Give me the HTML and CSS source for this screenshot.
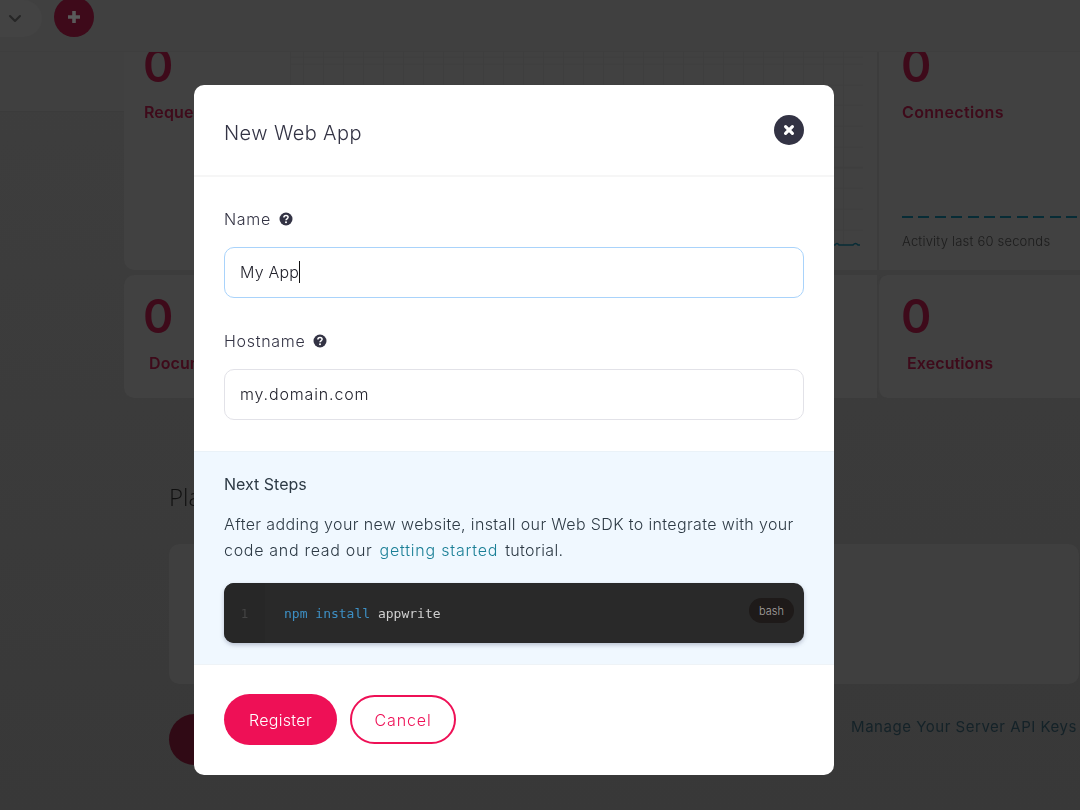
FILE: index.html
```html
<!DOCTYPE html>
<html lang="en">
<head>
<meta charset="utf-8">
<title>New Web App</title>
<link rel="stylesheet" href="styles.css">
</head>
<body>
<div class="page">
  <header class="topbar">
    <div class="scope">
      <svg class="chevron" viewBox="0 0 14 10" width="14" height="10"><path d="M2 2l5 5 5-5" fill="none" stroke="#262626" stroke-width="2" stroke-linecap="round" stroke-linejoin="round"/></svg>
    </div>
    <div class="add">
      <svg viewBox="0 0 14 14" width="14" height="14"><path d="M7 1v12M1 7h12" fill="none" stroke="#5a5a5a" stroke-width="3.6"/></svg>
    </div>
  </header>
  <section class="stats">
    <div class="side"></div>
    <div class="stat-grid">
      <div class="stat stat-top">
        <div class="stat-text clip">
          <div class="num">0</div>
          <div class="lbl">Requests</div>
        </div>
        <div class="chart">
          <svg class="trace" viewBox="0 0 28 5" width="28" height="5"><path d="M0 4h2q2-3 4 0h14q2.5-3 5 0h2" fill="none" stroke="#072c36" stroke-width="1.4"/></svg>
        </div>
      </div>
      <div class="stat stat-top stat-right">
        <div class="stat-text clip">
          <div class="num">0</div>
          <div class="lbl lbl-c">Connections</div>
        </div>
        <div class="spark"></div>
        <div class="activity">Activity last 60 seconds</div>
      </div>
      <div class="stat stat-low">
        <div class="num">0</div>
        <div class="lbl lbl-i">Documents</div>
      </div>
      <div class="stat stat-low stat-right">
        <div class="num">0</div>
        <div class="lbl lbl-i">Executions</div>
      </div>
    </div>
  </section>
  <section class="platforms">
    <h2 class="plat-title">Platforms</h2>
    <div class="plat-card"></div>
    <div class="plat-foot">
      <div class="plat-btn"></div>
      <div class="plat-link">Manage Your Server API Keys</div>
    </div>
  </section>
</div>

<div class="overlay">
  <div class="modal">
    <div class="modal-head">
      <h1 class="modal-title">New Web App</h1>
      <button class="close" type="button" aria-label="Close">
        <svg viewBox="0 0 12 12" width="12" height="12"><path d="M2.6 2.6l6.8 6.8M9.4 2.6l-6.8 6.8" fill="none" stroke="#fff" stroke-width="3.2" stroke-linecap="round"/></svg>
      </button>
    </div>
    <div class="modal-body">
      <div class="label">Name
        <svg class="help" viewBox="0 0 14 14" width="14" height="14"><circle cx="7" cy="7" r="6.5" fill="#333344"/><path d="M4.9 5.4c0-1.3 1-1.9 2.1-1.9s2.1.7 2.1 1.8c0 1.5-2.1 1.5-2.1 2.9" fill="none" stroke="#fff" stroke-width="1.5"/><circle cx="7" cy="10.3" r="1" fill="#fff"/></svg>
      </div>
      <div class="input input-focus">My App<span class="caret"></span></div>
      <div class="label label-2">Hostname
        <svg class="help" viewBox="0 0 14 14" width="14" height="14"><circle cx="7" cy="7" r="6.5" fill="#333344"/><path d="M4.9 5.4c0-1.3 1-1.9 2.1-1.9s2.1.7 2.1 1.8c0 1.5-2.1 1.5-2.1 2.9" fill="none" stroke="#fff" stroke-width="1.5"/><circle cx="7" cy="10.3" r="1" fill="#fff"/></svg>
      </div>
      <div class="input input-host">my.domain.com</div>
    </div>
    <div class="steps">
      <div class="steps-title">Next Steps</div>
      <p class="steps-text">After adding your new website, install our Web SDK to integrate with your<br><span class="steps-wide">code and read our</span> <a class="steps-link">getting started</a> tutorial.</p>
      <div class="code">
        <div class="gutter">1</div>
        <div class="code-line"><span class="kw">npm install</span> appwrite</div>
        <div class="lang">bash</div>
      </div>
    </div>
    <div class="modal-foot">
      <button class="btn btn-fill" type="button">Register</button>
      <button class="btn btn-line" type="button">Cancel</button>
    </div>
  </div>
</div>
</body>
</html>
```
FILE: styles.css
```css
* { box-sizing: border-box; }
html, body { margin: 0; height: 100%; overflow: hidden; }
body { font-family: "Inter", "Liberation Sans", sans-serif; background: #3a3a3a; }

.page {
  height: 810px;
  display: flex;
  flex-direction: column;
  overflow: hidden;
  background: linear-gradient(#3e3e3e, #383838);
  filter: blur(0.5px);
}

.topbar {
  height: 52px;
  flex: none;
  display: flex;
  align-items: flex-start;
  gap: 12px;
  background: #404040;
  border-bottom: 1px solid #3e3e3e;
}
.scope {
  width: 42px;
  height: 37px;
  background: #434343;
  border-radius: 0 19px 19px 0;
  display: flex;
  align-items: center;
  justify-content: flex-end;
  padding-right: 20px;
}
.add {
  width: 40px;
  height: 40px;
  margin-top: -3px;
  background: #3e0a1a;
  border-radius: 50%;
  display: flex;
  align-items: center;
  justify-content: center;
}

.stats { display: flex; flex: none; }
.side {
  width: 124px;
  height: 60px;
  flex: none;
  background: #404040;
  border-bottom: 1px solid #3b3b3b;
}
.stat-grid {
  flex: 1;
  display: grid;
  grid-template-columns: 753px 1fr;
  grid-template-rows: 218px 123px;
  row-gap: 5px;
}
.stat { background: #414141; position: relative; overflow: hidden; }
.stat-top { display: flex; padding-left: 20px; border-radius: 0 0 0 10px; }
.stat-right { border-left: 2px solid #3c3c3c; border-radius: 0; padding-left: 23px; }
.stat-top.stat-right { display: block; }
.stat-low { border-radius: 10px 0 0 10px; padding: 16px 20px 0; }
.stat-low.stat-right { padding-left: 23px; }
.clip .num { margin-top: -12px; }
.num {
  margin-left: -1px;
  font-size: 46px;
  font-weight: 600;
  line-height: 50px;
  color: #3e0a1a;
}
.lbl {
  margin-top: 10px;
  font-size: 16px;
  font-weight: 600;
  line-height: 24px;
  letter-spacing: 0.1px;
  color: #3e0a1a;
}
.stat-low .lbl { margin-top: 10px; }
.lbl-c { letter-spacing: 0.35px; }
.lbl-i { margin-left: 5px; }
.stat-text { width: 146px; flex: none; }
.chart {
  width: 573px;
  height: 193px;
  background-image:
    repeating-linear-gradient(90deg, #3e3e3e 0 1px, transparent 1px 20px),
    repeating-linear-gradient(180deg, #3e3e3e 0 1px, transparent 1px 20.7px);
  background-position: 13px 0, 0 11.6px;
  position: relative;
}
.trace {
  position: absolute;
  right: 2px;
  bottom: -1px;
}
.spark {
  margin-top: 92px;
  height: 2px;
  background: repeating-linear-gradient(90deg, #072c36 0 11px, transparent 11px 16.4px);
}
.activity {
  margin-top: 13px;
  font-size: 13px;
  font-weight: 300;
  line-height: 20px;
  letter-spacing: 0.2px;
  color: #1c1c1c;
}

.platforms { padding: 83px 1px 0 169px; flex: 1; }
.plat-title {
  margin: 0;
  font-family: "Open Sans", sans-serif;
  font-size: 24px;
  font-weight: 300;
  line-height: 32px;
  color: #101010;
}
.plat-card {
  margin-top: 31px;
  height: 140px;
  background: #3f3f3f;
  border-radius: 10px;
}
.plat-foot {
  margin-top: 30px;
  display: flex;
  justify-content: space-between;
  align-items: flex-start;
}
.plat-btn { width: 110px; height: 51px; background: #300a15; border-radius: 26px; }
.plat-link {
  margin-top: 2px;
  font-size: 15px;
  line-height: 22px;
  letter-spacing: 0.53px;
  color: #142228;
  padding-right: 2px;
}

.overlay {
  position: fixed;
  inset: 0;
  display: flex;
  justify-content: center;
  align-items: flex-start;
  padding: 85px 52px 0 0;
}
.modal {
  width: 640px;
  height: 690px;
  background: #fff;
  border-radius: 10px;
  overflow: hidden;
  display: flex;
  flex-direction: column;
  color: #333344;
}
.modal-head {
  height: 92px;
  flex: none;
  padding: 30px 30px 0;
  display: flex;
  justify-content: space-between;
  align-items: flex-start;
  border-bottom: 2px solid #f6f6f6;
}
.modal-title {
  margin: 0;
  font-size: 20px;
  font-weight: 300;
  line-height: 36px;
  letter-spacing: 0.4px;
}
.close {
  width: 30px;
  height: 30px;
  padding: 0;
  border: 0;
  border-radius: 50%;
  background: #333344;
  display: flex;
  align-items: center;
  justify-content: center;
}
.modal-body { padding: 30px 30px 0; height: 274px; flex: none; }
.label {
  display: flex;
  align-items: center;
  gap: 8px;
  font-size: 16px;
  font-weight: 300;
  line-height: 24px;
  letter-spacing: 0.7px;
  height: 24px;
}
.label-2 { margin-top: 31px; }
.help { flex: none; }
.input {
  margin-top: 16px;
  height: 51px;
  border: 1px solid #e2e2e8;
  border-radius: 10px;
  padding: 0 15px 2px;
  display: flex;
  align-items: center;
  font-size: 16px;
  font-weight: 300;
  letter-spacing: 0.2px;
  color: #22222c;
}
.input-focus { border-color: #a9d3fb; }
.input-host { letter-spacing: 0.85px; }
.caret { width: 1px; height: 22px; background: #111; }

.steps {
  height: 214px;
  flex: none;
  background: #f0f8ff;
  border-top: 1px solid #eaf2f8;
  border-bottom: 1px solid #eef3f7;
  padding: 20px 30px 0;
  color: #2d3a45;
}
.steps-title { font-size: 16px; font-weight: 400; line-height: 24px; }
.steps-text {
  margin: 15px 0 0;
  font-size: 16px;
  font-weight: 300;
  line-height: 26px;
  letter-spacing: 0.36px;
}
.steps-wide { letter-spacing: 0.7px; }
.steps-link { color: #1a7f96; margin: 0 2px; letter-spacing: 0.8px; }
.code {
  margin-top: 20px;
  height: 60px;
  background: #292929;
  border-radius: 10px;
  box-shadow: 0 2px 4px rgba(80, 90, 120, 0.35);
  display: flex;
  align-items: center;
  position: relative;
  overflow: hidden;
}
.gutter {
  width: 41px;
  height: 100%;
  flex: none;
  background: #272727;
  color: #444;
  font-family: "DejaVu Sans Mono", monospace;
  font-size: 12.5px;
  display: flex;
  align-items: center;
  justify-content: center;
}
.code-line {
  margin-left: 19px;
  font-family: "DejaVu Sans Mono", monospace;
  font-size: 13px;
  color: #d0d0d0;
  white-space: pre;
}
.kw { color: #3d8fc4; }
.lang {
  position: absolute;
  right: 10px;
  top: 15px;
  height: 25px;
  width: 45px;
  border-radius: 13px;
  background: #1e1a19;
  color: #a8a4a2;
  font-size: 11px;
  font-weight: 300;
  display: flex;
  align-items: center;
  justify-content: center;
}

.modal-foot { padding: 29px 30px 0; display: flex; gap: 13px; align-items: flex-start; }
.btn {
  height: 51px;
  border-radius: 26px;
  font-family: inherit;
  font-size: 16px;
  font-weight: 300;
  letter-spacing: 0.3px;
  padding: 0;
}
.btn-fill { width: 113px; background: #ee1056; border: 0; color: #fff; }
.btn-line {
  width: 106px;
  height: 49px;
  margin-top: 1px;
  background: #fff;
  border: 2px solid #ee1056;
  color: #ee1056;
  letter-spacing: 0.9px;
}
```
